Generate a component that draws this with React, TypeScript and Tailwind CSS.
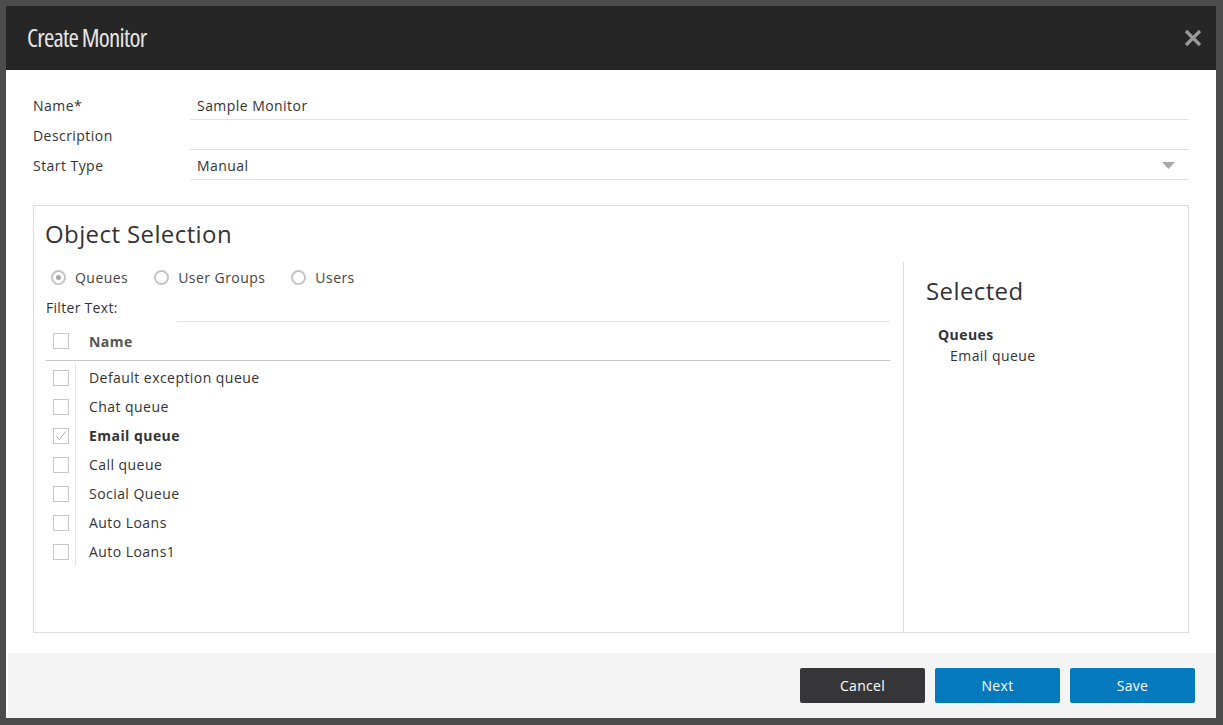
import React from "react";

const font = { fontFamily: '"Open Sans", "Noto Sans", sans-serif' };

function Radio({ label, checked }: { label: string; checked?: boolean }) {
  return (
    <div className="flex items-center gap-[9px]">
      <span className="w-[15px] h-[15px] rounded-full border-2 border-[#c4c4c4] flex items-center justify-center bg-white">
        {checked && <span className="w-[5px] h-[5px] rounded-full bg-[#a8a8a8]" />}
      </span>
      <span className="text-[14px] tracking-[0.45px] text-[#444]">{label}</span>
    </div>
  );
}

function Box({ checked }: { checked?: boolean }) {
  return (
    <span className="w-[16px] h-[16px] border border-[#c8c8c8] bg-white flex items-center justify-center">
      {checked && (
        <svg width="12" height="12" viewBox="0 0 12 12">
          <path d="M1.5 6.5 L4.5 9.5 L10.5 1.5" fill="none" stroke="#b0b0b0" strokeWidth="1" />
        </svg>
      )}
    </span>
  );
}

const rows = [
  { name: "Default exception queue" },
  { name: "Chat queue" },
  { name: "Email queue", checked: true },
  { name: "Call queue" },
  { name: "Social Queue" },
  { name: "Auto Loans" },
  { name: "Auto Loans1" },
];

export default function App() {
  return (
    <div className="w-[1223px] h-[725px] bg-[#4c4c4c] pt-[6px] pl-[6px] pr-[7px] pb-[7px]" style={font}>
      <div className="w-full h-full bg-white flex flex-col">
        <div className="h-[64px] bg-[#262626] flex items-center justify-between pl-[21px] pr-[14px] shrink-0">
          <span
            className="text-[25px] text-[#e6e6e6] tracking-[-0.8px]"
            style={{ fontStretch: "75%", fontFamily: '"Open Sans", "Liberation Sans Narrow", sans-serif' }}
          >
            Create Monitor
          </span>
          <svg width="18" height="18" viewBox="0 0 18 18">
            <path d="M2 2 L16 16 M16 2 L2 16" stroke="#9a9a9a" strokeWidth="3.2" />
          </svg>
        </div>

        <div className="flex-1 flex flex-col px-[27px] pt-[20px]">
          {[
            ["Name*", "Sample Monitor"],
            ["Description", ""],
            ["Start Type", "Manual"],
          ].map(([label, value], i) => (
            <div key={label} className="flex h-[30px]">
              <div className="w-[157px] text-[14px] tracking-[0.45px] text-[#333] leading-[29px] pt-[1px]">{label}</div>
              <div className="flex-1 border-b border-[#e2e2e2] text-[14px] tracking-[0.45px] text-[#333] leading-[27px] pt-[2px] pl-[7px] flex items-center justify-between pr-[14px]">
                <span>{value}</span>
                {i === 2 && (
                  <svg width="13" height="7" viewBox="0 0 13 7">
                    <path d="M0 0 L13 0 L6.5 7 Z" fill="#a8a8a8" />
                  </svg>
                )}
              </div>
            </div>
          ))}

          <div className="mt-[25px] h-[428px] border border-[#dcdcdc] flex flex-col">
            <div className="pl-[11px] pt-[12px] text-[24px] tracking-[0.4px] leading-[32px] text-[#333]">Object Selection</div>
            <div className="flex-1 flex mt-[12px]">
              <div className="w-[870px] border-r border-[#dcdcdc] pl-[12px] pr-[13px]">
                <div className="flex items-center h-[30px] pl-[5px] gap-[26px]">
                  <Radio label="Queues" checked />
                  <Radio label="User Groups" />
                  <Radio label="Users" />
                </div>
                <div className="flex h-[30px] items-center">
                  <span className="w-[131px] text-[14px] tracking-[0.3px] text-[#333]">Filter Text:</span>
                  <div className="flex-1 h-[30px] border-b border-[#e2e2e2]" />
                </div>
                <div className="flex items-center h-[39px] border-b border-[#c8c8c8]">
                  <div className="w-[29px] pl-[7px] flex items-center">
                    <Box />
                  </div>
                  <span className="pl-[14px] text-[14px] tracking-[0.45px] font-bold text-[#555]">Name</span>
                </div>
                <div>
                  {rows.map((r, i) => (
                    <div key={r.name} className={`flex h-[29px] ${i === 0 ? "pt-[2px] h-[31px]" : ""}`}>
                      <div className="w-[30px] pl-[7px] flex items-center border-r border-[#e6e6e6]">
                        <Box checked={r.checked} />
                      </div>
                      <div
                        className={`pl-[13px] flex items-center text-[14px] tracking-[0.45px] text-[#333] ${r.checked ? "font-bold" : ""}`}
                      >
                        {r.name}
                      </div>
                    </div>
                  ))}
                </div>
              </div>
              <div className="flex-1 pl-[22px] pt-[13px]">
                <div className="text-[24px] tracking-[0.4px] leading-[32px] text-[#333]">Selected</div>
                <div className="mt-[17px] pl-[12px] text-[14px] tracking-[0.45px] font-bold text-[#333] leading-[21px]">Queues</div>
                <div className="pl-[24px] text-[14px] tracking-[0.45px] text-[#333] leading-[21px]">Email queue</div>
              </div>
            </div>
          </div>
        </div>

        <div className="h-[65px] mt-[20px] ml-[2px] bg-[#f4f4f4] flex items-center justify-end pr-[21px] gap-[10px] shrink-0">
          <button className="w-[125px] h-[35px] rounded-[2px] bg-[#363638] text-white text-[14px] tracking-[0.3px]">Cancel</button>
          <button className="w-[125px] h-[35px] rounded-[2px] bg-[#0479be] text-white text-[14px] tracking-[0.3px]">Next</button>
          <button className="w-[125px] h-[35px] rounded-[2px] bg-[#0479be] text-white text-[14px] tracking-[0.3px]">Save</button>
        </div>
      </div>
    </div>
  );
}
